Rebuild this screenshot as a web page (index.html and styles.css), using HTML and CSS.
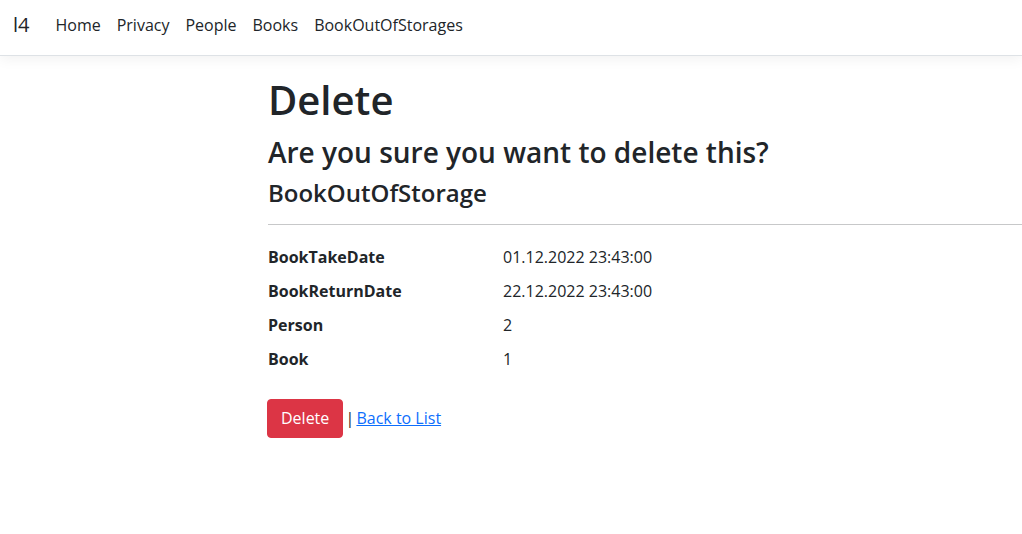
FILE: index.html
```html
<!DOCTYPE html>
<html lang="en">
  <head>
    <meta charset="UTF-8" />
    <meta name="viewport" content="width=device-width, initial-scale=1.0" />
    <title>Delete - l4</title>

    <link rel="stylesheet" href="styles.css">
  </head>
  <body>
    <header>
      <nav class="navbar">
        <a class="navbar-brand" href="#">l4</a>
        <ul class="navbar-nav">
          <li><a class="nav-link" href="#">Home</a></li>
          <li><a class="nav-link" href="#">Privacy</a></li>
          <li><a class="nav-link" href="#">People</a></li>
          <li><a class="nav-link" href="#">Books</a></li>
          <li><a class="nav-link" href="#">BookOutOfStorages</a></li>
        </ul>
      </nav>
    </header>

    <main class="container">
      <h1>Delete</h1>

      <h3>Are you sure you want to delete this?</h3>
      <div>
        <h4>BookOutOfStorage</h4>
        <hr />
        <dl class="details">
          <dt>BookTakeDate</dt>
          <dd>01.12.2022 23:43:00</dd>
          <dt>BookReturnDate</dt>
          <dd>22.12.2022 23:43:00</dd>
          <dt>Person</dt>
          <dd>2</dd>
          <dt>Book</dt>
          <dd>1</dd>
        </dl>

        <form class="delete-form">
          <button type="submit" class="btn-danger">Delete</button> |
          <a href="#">Back to List</a>
        </form>
      </div>
    </main>
  </body>
</html>
```

FILE: styles.css
```css
* {
  box-sizing: border-box;
}

html {
  font-size: 16px;
}

body {
  margin: 0;
  font-family: "Segoe UI", "Open Sans", "Noto Sans", sans-serif;
  font-size: 1rem;
  line-height: 1.5;
  color: #212529;
  background: #fff;
  overflow: hidden;
}

header {
  margin-bottom: 1rem;
}

.navbar {
  display: flex;
  align-items: center;
  padding: 5px 12px 10px;
  border-bottom: 1px solid #dee2e6;
  background: #fff;
  box-shadow: 0 0.25rem 0.75rem rgba(0, 0, 0, 0.05);
}

.navbar-brand {
  padding: 0.3125rem 0;
  margin-right: 18px;
  margin-left: 1px;
  font-size: 1.25rem;
  color: #212529;
  text-decoration: none;
}

.navbar-nav {
  display: flex;
  list-style: none;
  margin: 0;
  padding: 0;
}

.nav-link {
  display: block;
  padding: 0.5rem;
  color: #212529;
  text-decoration: none;
}

.container {
  padding-top: 4px;
  padding-left: 268px;
}

h1,
h3,
h4 {
  margin: 0;
  font-weight: 600;
}

h1 {
  font-size: 2.5rem;
  line-height: 48px;
  margin-bottom: 8px;
}

h3 {
  font-size: 1.75rem;
  line-height: 40px;
  margin-bottom: 6px;
}

h4 {
  font-size: 1.5rem;
  line-height: 30px;
}

hr {
  margin: 16px 0 18px;
  border: 0;
  border-top: 1px solid #212529;
  opacity: 0.25;
}

.details {
  display: grid;
  grid-template-columns: 235px 1fr;
  margin: 0 0 19px;
  line-height: 26px;
  padding-top: 1px;
}

.details dt {
  font-weight: 700;
  margin-bottom: 8px;
}

.details dd {
  margin: 0 0 8px;
}

.delete-form {
  margin-left: -1px;
}

.btn-danger {
  font-family: inherit;
  font-size: 1rem;
  line-height: 25px;
  padding: 6px 13px;
  margin-right: -2px;
  color: #fff;
  background: #dc3545;
  border: 1px solid #dc3545;
  border-radius: 0.25rem;
  cursor: pointer;
}

.delete-form a {
  color: #0d6efd;
  margin-left: -2px;
}
```
